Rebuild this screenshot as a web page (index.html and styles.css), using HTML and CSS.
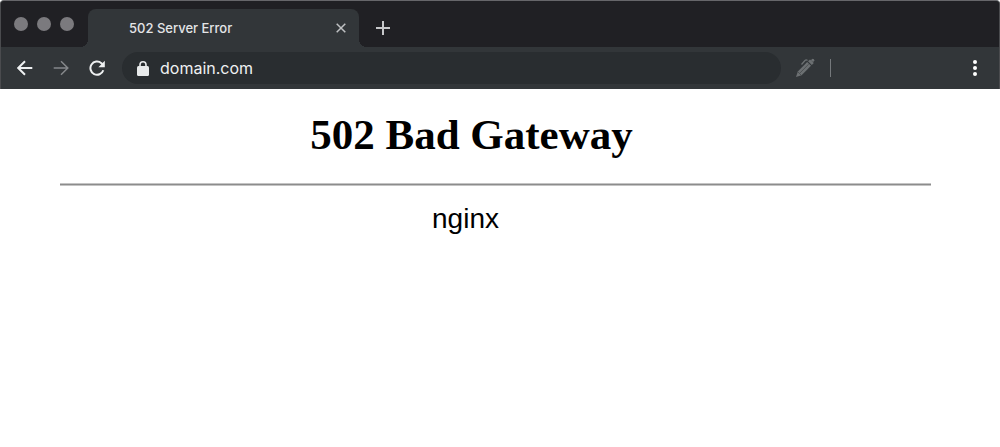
FILE: index.html
```html
<!DOCTYPE html>
<html lang="en">
<head>
  <meta charset="UTF-8">
  <meta name="viewport" content="width=device-width,initial-scale=1.0">
  <title>502 Server Error</title>
  <link rel="stylesheet" href="styles.css">
</head>
<body>
  <div class="browser">
    <div class="tabbar">
      <div class="lights">
        <button class="light" aria-label="Close window"></button>
        <button class="light" aria-label="Minimize"></button>
        <button class="light" aria-label="Zoom"></button>
      </div>
      <div class="tab">
        <span class="tabtitle">502 Server Error</span>
        <button class="iconbtn tabclose" aria-label="Close tab">
          <svg width="10" height="10" viewBox="0 0 10 10"><path d="M.7.7l8.6 8.6M9.3.7L.7 9.3"/></svg>
        </button>
      </div>
      <button class="iconbtn newtab" aria-label="New tab">
        <svg width="14" height="14" viewBox="0 0 14 14"><path d="M7 0v14M0 7h14"/></svg>
      </button>
    </div>
    <div class="toolbar">
      <div class="nav">
        <button class="iconbtn" aria-label="Back">
          <svg width="16" height="16" viewBox="0 0 16 16"><path d="M15.3 8H1.5M8 1.2L1.2 8 8 14.8"/></svg>
        </button>
        <button class="iconbtn forward" aria-label="Forward">
          <svg width="16" height="16" viewBox="0 0 16 16"><path d="M.7 8h13.8M8 1.2L14.8 8 8 14.8"/></svg>
        </button>
        <button class="iconbtn" aria-label="Reload">
          <svg width="16" height="16" viewBox="0 0 16 16"><path d="M14.3 10.2A6.6 6.6 0 1 1 12.4 3.2L14 4.8"/><path class="fill" d="M15.8.8v6.4H9.4z"/></svg>
        </button>
      </div>
      <label class="address">
        <svg width="12" height="15" viewBox="0 0 12 15" aria-hidden="true"><rect class="lockbody" y="5" width="12" height="10" rx="1.5"/><path d="M3 6V3.8a3 3 0 0 1 6 0V6"/></svg>
        <input class="url" type="text" value="domain.com" aria-label="Address" spellcheck="false">
      </label>
      <button class="iconbtn pen" aria-label="Extension">
        <svg width="20" height="20" viewBox="0 0 20 20"><path class="fill" d="M1 19l1.800-5.400 9.400-9.600 3.800 3.800-9.400 9.400z"/><path class="fill" d="M13 3.200l2-1.800 3.800 3.600-2 2z"/><circle class="fill" cx="17.800" cy="2.200" r="1.500"/><path class="clip" d="M6.500 6.500L10 2.500q1.200-1.200 2.500 0"/><path class="groove" d="M4.600 15.400l9-9.200M3 14l3 3"/></svg>
      </button>
      <span class="divider"></span>
      <button class="iconbtn menu" aria-label="Menu">
        <svg width="4" height="16" viewBox="0 0 4 16"><circle cx="2" cy="2" r="2"/><circle cx="2" cy="8" r="2"/><circle cx="2" cy="14" r="2"/></svg>
      </button>
    </div>
  </div>
  <main class="page">
    <h1 class="title">502 Bad Gateway</h1>
    <hr class="line">
    <p class="server">nginx</p>
  </main>
</body>
</html>
```
FILE: styles.css
```css
html,body,h1,p{margin:0;padding:0;}
body{
  background: #fff;
  color: #000;
  font-family: Inter, "Liberation Sans", sans-serif;
}
button,input{
  border: none;
  padding: 0;
  background: none;
  font-family: inherit;
}
.browser{
  background: #323639;
  border-top: 1px solid #66666a;
  border-left: 1px solid #4a4b4e;
  border-right: 1px solid #4a4b4e;
  border-radius: 4px 4px 0 0;
  overflow: hidden;
}
.tabbar{
  display: flex;
  height: 46px;
  background: #202024;
}
.lights{
  display: flex;
  align-items: center;
  gap: 9px;
  width: 87px;
  padding-left: 13px;
  box-sizing: border-box;
}
.light{
  width: 14px;
  height: 14px;
  border-radius: 50%;
  background: #7b7a7e;
}
.tab{
  position: relative;
  display: flex;
  align-items: center;
  justify-content: space-between;
  width: 271px;
  margin-top: 8px;
  padding: 0 13px 0 41px;
  box-sizing: border-box;
  background: #323639;
  border-radius: 8px 8px 0 0;
}
/* flared feet of the active tab */
.tab::before,
.tab::after{
  content: "";
  position: absolute;
  bottom: 0;
  width: 8px;
  height: 8px;
}
.tab::before{
  left: -8px;
  background: radial-gradient(circle at 0 0, #202024 8px, #323639 8px);
}
.tab::after{
  right: -8px;
  background: radial-gradient(circle at 100% 0, #202024 8px, #323639 8px);
}
.tabtitle{
  font-size: 13px;
  font-weight: 500;
  line-height: 20px;
  color: #e4e5e7;
}
.iconbtn{
  display: flex;
  align-items: center;
  justify-content: center;
  color: #eef0f1;
}
.iconbtn svg{
  fill: none;
  stroke: currentColor;
  stroke-width: 2;
}
.iconbtn .fill{
  fill: currentColor;
  stroke: none;
}
.tabclose{
  color: #bfc1c3;
}
.tabclose svg{
  stroke-width: 1.5;
}
.newtab{
  width: 48px;
  padding-top: 8px;
  color: #c7c8ca;
}
.toolbar{
  display: flex;
  align-items: center;
  height: 42px;
  padding-right: 22px;
}
.nav{
  display: flex;
  gap: 20px;
  padding: 0 17px 0 16px;
}
.forward{
  color: #84878a;
}
.forward svg{
  stroke-width: 1.5;
}
.address{
  display: flex;
  flex: 1;
  align-items: center;
  gap: 11px;
  height: 32px;
  padding: 0 15px;
  border-radius: 16px;
  background: #292d30;
}
.address svg{
  fill: none;
  stroke: #e8eaeb;
  stroke-width: 1.6;
}
.address .lockbody{
  fill: #e8eaeb;
  stroke: none;
}
.url{
  flex: 1;
  min-width: 0;
  height: 24px;
  font-size: 16px;
  color: #eff1f2;
  outline: none;
}
.pen{
  margin-left: 14px;
  color: #6c7072;
}
.pen svg .clip{
  stroke-width: 1.3;
}
.pen svg .groove{
  stroke: #4d5153;
  stroke-width: 1;
}
.divider{
  width: 1px;
  height: 18px;
  margin: 0 142px 0 15px;
  background: #75797c;
}
.menu svg{
  fill: #fff;
  stroke: none;
}
.page{
  padding: 21px 69px 0 60px;
  text-align: center;
}
.title{
  padding-right: 48px;
  font-family: "Liberation Serif", serif;
  font-size: 43px;
  line-height: 50px;
}
.line{
  height: 1px;
  margin: 23px 0 15px;
  border: 1px solid #c4c4c4;
  border-width: 1px 0;
  background: #8c8c8c;
}
.server{
  padding-right: 60px;
  font-family: "Liberation Sans", Arial, sans-serif;
  font-size: 28px;
  line-height: 36px;
}
```
